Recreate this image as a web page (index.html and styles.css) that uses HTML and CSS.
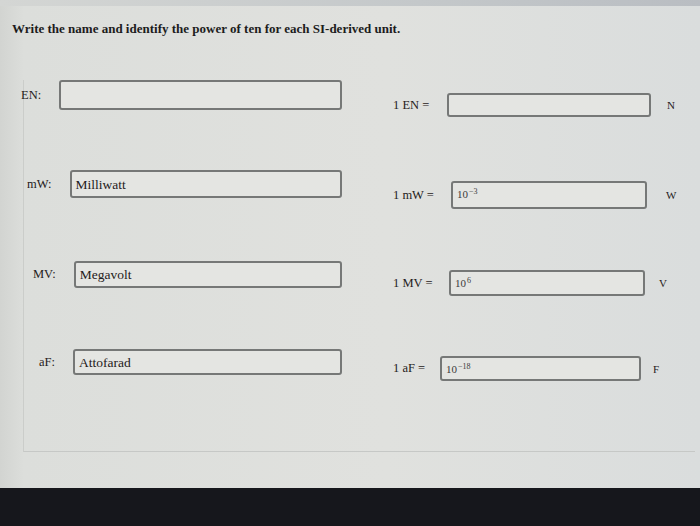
FILE: index.html
```html
<!DOCTYPE html>
<html>
<head>
<meta charset="utf-8">
<link rel="stylesheet" href="styles.css">
</head>
<body>
<div class="screen">
  <div class="topbar"></div>
  <h1 class="title">Write the name and identify the power of ten for each SI-derived unit.</h1>
  <div class="panel">
    <div class="row row-1">
      <div class="left">
        <span class="lbl">EN:</span>
        <span class="field"></span>
      </div>
      <div class="right">
        <span class="eq">1 EN =</span>
        <span class="field rfield"></span>
        <span class="unit">N</span>
      </div>
    </div>
    <div class="row row-2">
      <div class="left">
        <span class="lbl">mW:</span>
        <span class="field">Milliwatt</span>
      </div>
      <div class="right">
        <span class="eq">1 mW =</span>
        <span class="field rfield pow">10<sup>&minus;3</sup></span>
        <span class="unit">W</span>
      </div>
    </div>
    <div class="row row-3">
      <div class="left">
        <span class="lbl">MV:</span>
        <span class="field">Megavolt</span>
      </div>
      <div class="right">
        <span class="eq">1 MV =</span>
        <span class="field rfield pow">10<sup>6</sup></span>
        <span class="unit">V</span>
      </div>
    </div>
    <div class="row row-4">
      <div class="left">
        <span class="lbl">aF:</span>
        <span class="field">Attofarad</span>
      </div>
      <div class="right">
        <span class="eq">1 aF =</span>
        <span class="field rfield pow">10<sup>&minus;18</sup></span>
        <span class="unit">F</span>
      </div>
    </div>
  </div>
</div>
<div class="bezel"></div>
</body>
</html>
```

FILE: styles.css
```css
html, body {
  margin: 0;
  padding: 0;
}
body {
  width: 700px;
  height: 526px;
  overflow: hidden;
  background: #16171c;
  font-family: "Liberation Serif", "DejaVu Serif", serif;
  color: #1f2020;
}
.screen {
  height: 488px;
  background: linear-gradient(90deg, #d2d4d1 0px, #dcdedb 24px, #e0e1de 55%, #dadddd 100%);
  display: flex;
  flex-direction: column;
}
.topbar {
  height: 6px;
  background: linear-gradient(90deg, #d4d6d4 0%, #c4c8ca 60%, #b9bdc2 100%);
}
.title {
  margin: 15px 0 0 12px;
  font-size: 13px;
  font-weight: bold;
  line-height: 16px;
  color: #1c1c1c;
}
.panel {
  margin: 43px 5px 0 23px;
  height: 371px;
  border-left: 1px solid #cbcdca;
  border-bottom: 1px solid #c6c8c6;
  display: flex;
  flex-direction: column;
}
.row {
  display: flex;
  align-items: flex-start;
  height: 90px;
  flex: none;
}
.row-2 { height: 91px; }
.row-3 { height: 88px; }
.left {
  box-sizing: border-box;
  width: calc(318px - var(--indent));
  margin-left: var(--indent);
  display: flex;
  align-items: center;
  gap: 18px;
  flex: none;
}
.lbl {
  font-size: 12.5px;
  flex: none;
}
.field {
  box-sizing: border-box;
  height: var(--h);
  flex: 1;
  border: 2px solid #767877;
  border-radius: 3px;
  background: #e4e5e2;
  font-size: 13.5px;
  line-height: 15px;
  padding: 0 4px;
  display: flex;
  align-items: center;
}
.right {
  margin-left: 51px;
  margin-top: var(--rtop);
  display: flex;
  align-items: center;
}
.eq {
  font-size: 12.5px;
  width: var(--eqw);
  flex: none;
}
.rfield {
  flex: none;
  width: var(--rw);
  height: var(--rh);
}
.pow {
  font-size: 11px;
  color: #3a3b3b;
  align-items: flex-start;
  padding-top: 4px;
}
.pow sup {
  font-size: 8px;
  position: relative;
  top: -3px;
  vertical-align: top;
  margin-left: 1px;
}
.unit {
  font-size: 11px;
  margin-left: var(--ug);
}
.row-1 { --indent: -3px; --h: 30px; --rtop: 13px; --rh: 24px; --rw: 204px; --eqw: 54px; --ug: 16px; }
.row-2 { --indent: 3px; --h: 28px; --rtop: 11px; --rh: 28px; --rw: 196px; --eqw: 58px; --ug: 19px; }
.row-3 { --indent: 9px; --h: 27px; --rtop: 9px; --rh: 26px; --rw: 196px; --eqw: 56px; --ug: 14px; }
.row-4 { --indent: 15px; --h: 26px; --rtop: 7px; --rh: 25px; --rw: 201px; --eqw: 47px; --ug: 12px; }
.bezel {
  height: 38px;
  background: #16171c;
}
```
